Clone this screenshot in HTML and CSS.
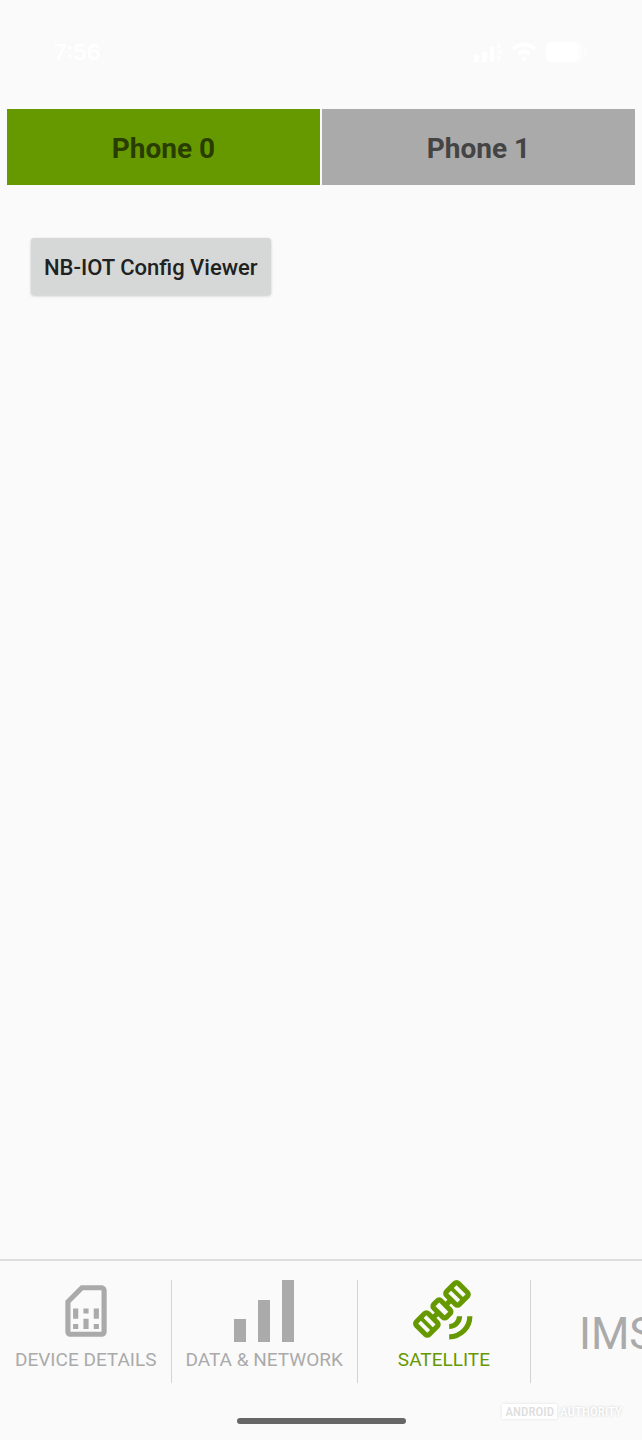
FILE: index.html
```html
<!DOCTYPE html>
<html lang="en">
<head>
    <meta charset="UTF-8">
    <meta name="viewport" content="width=device-width, initial-scale=1.0">
    <title>Satellite</title>
    <link rel="stylesheet" href="styles.css">
</head>
<body>

    <header class="status-bar">
        <span class="clock">7:56</span>
        <div class="status-icons">
            <svg width="30" height="20" viewBox="0 0 30 20" fill="currentColor" aria-hidden="true">
                <rect x="1" y="13" width="5" height="7" rx="1"/>
                <rect x="9" y="10" width="5" height="10" rx="1"/>
                <rect x="17" y="5" width="4" height="15" rx="1"/>
                <path d="M24 1h4v5h-4zM25 8h4v4h-4zM24 14h4v5h-4z" opacity=".5"/>
            </svg>
            <svg width="26" height="20" viewBox="0 0 26 20" fill="none" stroke="currentColor" stroke-width="4" aria-hidden="true">
                <path d="M2 7Q13-2 24 7M7 12q6-5 12 0"/>
                <circle cx="13" cy="17" r="1" stroke-width="2"/>
            </svg>
            <svg width="43" height="22" viewBox="0 0 43 22" fill="currentColor" aria-hidden="true">
                <rect x="1" y="1" width="32" height="20" rx="6"/>
                <rect x="1" y="1" width="36" height="20" rx="6" opacity=".5"/>
                <rect x="39" y="7" width="3" height="8" rx="1" opacity=".5"/>
            </svg>
        </div>
    </header>

    <div class="phone-tabs">
        <button class="phone-tab active" type="button">Phone 0</button>
        <button class="phone-tab" type="button">Phone 1</button>
    </div>

    <main class="content">
        <button class="config-button" type="button">NB-IOT Config Viewer</button>
    </main>

    <nav class="bottom-nav">
        <a class="nav-item" href="#device">
            <svg class="nav-icon" viewBox="0 0 24 24" fill="currentColor" aria-hidden="true">
                <path fill-rule="evenodd" d="M18 2h-8L4 8v12c0 1.100.9 2 2 2h12c1.100 0 2-.9 2-2V4c0-1.100-.9-2-2-2zm0 18H6V8.830L10.830 4H18v16z"/>
                <path d="M7 17h2v2H7zM15 17h2v2h-2zM7 11h2v4H7zM11 15h2v4h-2zM11 11h2v2h-2zM15 11h2v4h-2z"/>
            </svg>
            <span>DEVICE DETAILS</span>
        </a>
        <a class="nav-item" href="#data">
            <svg class="nav-icon" viewBox="0 0 62 62" fill="currentColor" aria-hidden="true">
                <path d="M1 39h12v23H1zM25 20h12v42H25zM49 0h12v62H49z"/>
            </svg>
            <span>DATA &amp; NETWORK</span>
        </a>
        <a class="nav-item active" href="#satellite" aria-current="page">
            <svg class="nav-icon" viewBox="0 0 24 24" fill="none" stroke="currentColor" stroke-width="2" aria-hidden="true">
                <g transform="rotate(-45 11.200 11.200)">
                    <rect x="-.3" y="7.700" width="6.500" height="7" rx="1"/>
                    <rect x="9.200" y="7.700" width="4" height="7" rx="1"/>
                    <rect x="16.200" y="7.700" width="6.500" height="7" rx="1"/>
                    <path d="M6.500 11.200h2.500M13.500 11.200h2.500"/>
                    <path d="M2.950 8v6M19.450 8v6" stroke-width="1.500"/>
                </g>
                <path d="M22 14a8 8 0 0 1-8 8M18 14a4 4 0 0 1-4 4"/>
            </svg>
            <span>SATELLITE</span>
        </a>
        <a class="nav-item text-only" href="#ims">IMS</a>
    </nav>

    <footer class="footer">
        <div class="home-handle"></div>
        <div class="watermark"><span class="watermark-box">ANDROID</span> <span>AUTHORITY</span></div>
    </footer>

</body>
</html>
```
FILE: styles.css
```css
* {
    box-sizing: border-box;
}

body {
    margin: 0;
    min-height: 100vh;
    display: flex;
    flex-direction: column;
    overflow-x: hidden;
    background-color: #fafafa;
    font-family: Roboto, sans-serif;
}

/* --- Status bar --- */
.status-bar {
    display: flex;
    justify-content: space-between;
    align-items: center;
    height: 104px;
    padding: 0 54px;
    color: #fff;
}

.clock {
    font-family: Inter, sans-serif;
    font-size: 22px;
    font-weight: 600;
}

.status-icons {
    display: flex;
    align-items: center;
    gap: 8px;
}

/* --- Phone tabs --- */
.phone-tabs {
    display: flex;
    gap: 2px;
    margin: 5px 7px 0;
}

.phone-tab {
    flex: 1;
    height: 76px;
    padding: 2px 0 0;
    border: none;
    background-color: #aaa;
    color: #444;
    font-family: inherit;
    font-size: 28px;
    font-weight: 700;
}

.phone-tab.active {
    background-color: #690;
    color: #293d00;
}

/* --- Content --- */
.content {
    flex: 1;
    padding: 53px 31px;
}

.config-button {
    height: 57px;
    padding: 1px 13px 0;
    border: none;
    border-radius: 3px;
    background-color: #d6d8d7;
    color: #202121;
    font-family: inherit;
    font-size: 22px;
    font-weight: 500;
    box-shadow: 0 1px 3px rgba(0, 0, 0, 0.2);
}

/* --- Bottom navigation --- */
.bottom-nav {
    display: flex;
    height: 124px;
    padding: 19px 0 0 1px;
    border-top: 2px solid #ddd;
    overflow: hidden;
}

.nav-item {
    display: flex;
    flex: none;
    flex-direction: column;
    align-items: center;
    gap: 6px;
    padding: 0 14px;
    border-right: 1px solid #d4d4d4;
    color: #aaa;
    font-size: 19px;
    line-height: 24px;
    text-decoration: none;
    white-space: nowrap;
}

.nav-item.active {
    padding: 0 40px;
    color: #690;
}

.nav-item.text-only {
    justify-content: center;
    padding: 4px 48px 0;
    font-size: 44px;
}

.nav-icon {
    width: 62px;
    height: 62px;
}

/* --- Footer --- */
.footer {
    position: relative;
    display: flex;
    justify-content: center;
    height: 57px;
    padding-top: 35px;
}

.home-handle {
    width: 169px;
    height: 6px;
    border-radius: 3px;
    background-color: #666;
}

.watermark {
    position: absolute;
    top: 21px;
    right: 20px;
    display: flex;
    align-items: center;
    gap: 3px;
    color: #fff;
    font-family: "Roboto Condensed", "Liberation Sans Narrow", Roboto, sans-serif;
    font-size: 13px;
    font-weight: 500;
    line-height: 15px;
    text-shadow: 0 0 3px rgba(0, 0, 0, 0.2);
}

.watermark-box {
    padding: 0 3px;
    background-color: #fff;
    color: #dedede;
    box-shadow: 0 0 3px rgba(0, 0, 0, 0.1);
    text-shadow: none;
}
```
